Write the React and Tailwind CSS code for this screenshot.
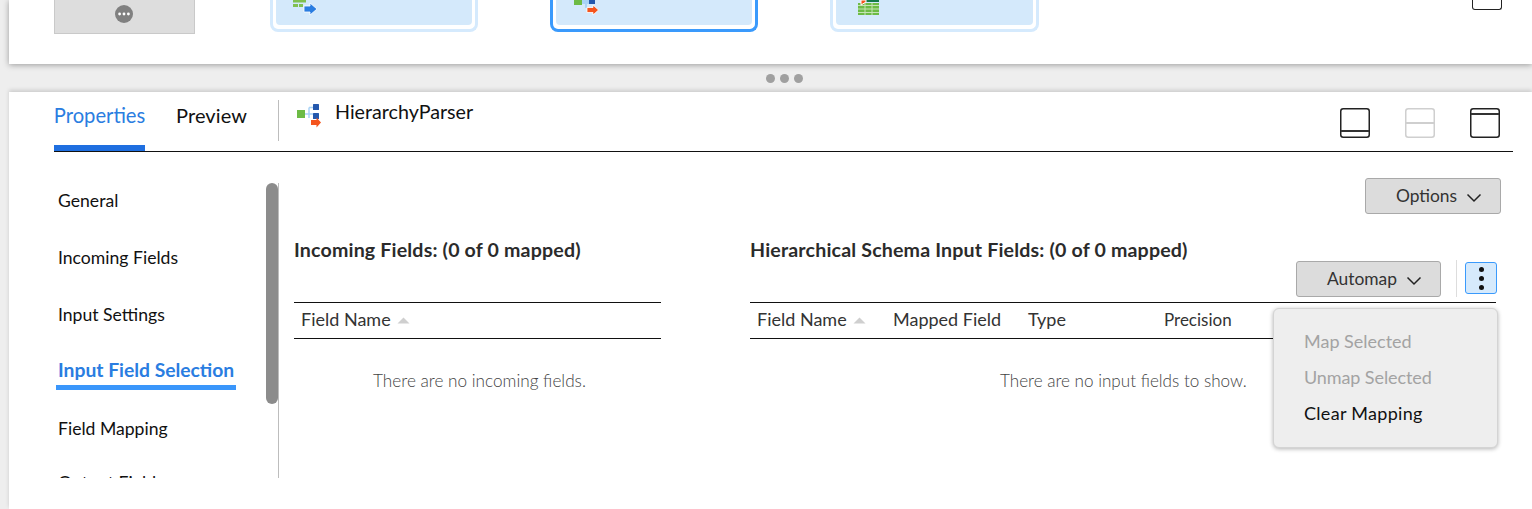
function Chevron({ className = "" }) {
  return (
    <svg width="16" height="10" viewBox="0 0 16 10" className={className} fill="none">
      <path d="M1.5 1.5 L8 8 L14.5 1.5" stroke="#222" strokeWidth="1.5" />
    </svg>
  );
}

function SortUp() {
  return (
    <svg width="13" height="7" viewBox="0 0 13 7" className="ml-[6px] mt-[1px]">
      <path d="M0.5 6.5 L6.5 0.5 L12.5 6.5 Z" fill="#cfcfcf" />
    </svg>
  );
}

function NodeCard({ selected, w = "w-[208px]", children }) {
  return (
    <div
      className={
        "h-[40px] shrink-0 rounded-b-[8px] border-[3px] border-t-0 bg-white px-[3px] pb-[4px] " +
        w +
        " " +
        (selected ? "border-[#3a9afc]" : "border-[#d5eafd]")
      }
    >
      <div className="h-full w-full overflow-hidden rounded-b-[4px] bg-[#d4e9fb] pt-[8px]">{children}</div>
    </div>
  );
}

function PanelIcon({ kind }) {
  const c = kind === "mid" ? "#cfcfcf" : "#222";
  return (
    <svg width="30" height="30" viewBox="0 0 30 30" fill="none">
      <rect x="0.75" y="0.75" width="28.5" height="28.5" rx="2.5" stroke={c} strokeWidth="1.5" />
      {kind === "bottom" && <rect x="1" y="22" width="28" height="2" fill="#333" />}
      {kind === "mid" && <rect x="1" y="14" width="28" height="2" fill={c} />}
      {kind === "top" && <rect x="1" y="5" width="28" height="2" fill="#333" />}
    </svg>
  );
}

function HierarchyIcon() {
  return (
    <svg width="24" height="24" viewBox="0 0 24 24">
      <path d="M8 10 H16 M12 3.5 V14 M12 3.5 H16" stroke="#a9d3f7" strokeWidth="1.5" fill="none" />
      <rect x="0" y="6" width="8" height="8" fill="#6dbb45" />
      <rect x="16" y="0" width="6" height="6" rx="0.5" fill="#2458ad" />
      <rect x="16" y="9" width="6" height="6" rx="0.5" fill="#2458ad" />
      <path d="M14 16 H19.5 V13.5 L24 18.5 L19.5 23.5 V21 H14 Z" fill="#f4541d" />
    </svg>
  );
}

function Nav({ children, active, className = "" }) {
  return (
    <div className={"flex h-[57px] shrink-0 items-center " + (active ? "pb-[2px] " : "pt-[2px] ") + className}>
      <span
        className={
          active
            ? "relative px-[2px] text-[19.3px] font-bold text-[#2a7de1] after:absolute after:-bottom-[5px] after:left-0 after:h-[5px] after:w-full after:bg-[#3a96fb] after:content-['']"
            : "pl-[2px] text-[17.6px] text-[#111]"
        }
      >
        {children}
      </span>
    </div>
  );
}

function GrayButton({ label, w }) {
  return (
    <button className={"flex h-[36px] items-center justify-center gap-[9px] rounded-[3px] border border-[#a9a9a9] bg-[#dcdcdc] pl-[12px] text-[17.4px] text-[#333] " + w}>
      <span>{label}</span>
      <Chevron className="mt-[3px]" />
    </button>
  );
}

export default function App() {
  return (
    <div
      className="relative h-[509px] w-[1532px] overflow-hidden bg-[#eeeeee] pl-[9px]"
      style={{ fontFamily: "Lato, 'Open Sans', sans-serif" }}
    >
      {/* top canvas */}
      <div className="relative z-10 flex h-[64px] items-start bg-white pl-[45px] shadow-[0_1px_6px_rgba(0,0,0,0.35)]">
        <div className="flex h-[34px] w-[141px] shrink-0 items-end justify-center border border-t-0 border-[#c9c9c9] bg-[#dddddd] pb-[10px] pr-[1px]">
          <svg width="18" height="18" viewBox="0 0 18 18">
            <circle cx="9" cy="9" r="9" fill="#808080" />
            <circle cx="4.6" cy="9" r="1.4" fill="#fff" />
            <circle cx="9" cy="9" r="1.4" fill="#fff" />
            <circle cx="13.4" cy="9" r="1.4" fill="#fff" />
          </svg>
        </div>
        <div className="ml-[75px] mt-[-8px]">
          <NodeCard>
            <svg width="26" height="17" viewBox="0 0 26 17" className="ml-[17px]">
              <path d="M0 0 H13 V2.5 H0 Z M0 4 H5 V7 H0 Z M6 4 H10 V7 H6 Z" fill="#80c050" />
              <path d="M11 6 H17 V3 L24 9 L17 15 V12 H11 Z" fill="#2a7de1" stroke="#fff" strokeWidth="0.8" />
            </svg>
          </NodeCard>
        </div>
        <div className="ml-[72px] mt-[-8px]">
          <NodeCard selected>
            <svg width="26" height="17" viewBox="0 0 26 17" className="ml-[18px]">
              <rect x="7" y="0" width="8" height="4" fill="#a9d3f7" />
              <rect x="11" y="0" width="2" height="8" fill="#a9d3f7" />
              <rect x="0" y="0" width="8" height="5" fill="#6dbb45" />
              <rect x="15" y="0" width="6" height="4" fill="#2458ad" />
              <path d="M13 7.5 H19 V5 L24.5 10 L19 15 V12.5 H13 Z" fill="#f4541d" stroke="#fff" strokeWidth="0.8" />
            </svg>
          </NodeCard>
        </div>
        <div className="ml-[72px] mt-[-8px]">
          <NodeCard w="w-[209px]">
            <svg width="26" height="17" viewBox="0 0 26 17" className="ml-[22px]">
              <rect x="8" y="0" width="13" height="2" fill="#137a4a" />
              <path d="M0 3 H21 V15 H0 Z" fill="#6dbb45" />
              <path d="M7 3 V15 M14 3 V15 M0 5.5 H21 M0 9 H21 M0 12.5 H21" stroke="#c5e3b5" strokeWidth="1" />
              <path d="M3 5 L3 0 L8 0 L8 2 Z" fill="#f4541d" stroke="#fff" strokeWidth="1" />
            </svg>
          </NodeCard>
        </div>
        <div className="ml-auto mr-[30px] h-[10px] w-[30px] rounded-b-[3px] border-[1.5px] border-t-0 border-[#222]" />
      </div>

      {/* splitter */}
      <div className="flex h-[28px] items-center justify-center gap-[5px] pl-[27px]">
        <span className="h-[9px] w-[9px] rounded-full bg-[#a0a0a0]" />
        <span className="h-[9px] w-[9px] rounded-full bg-[#a0a0a0]" />
        <span className="h-[9px] w-[9px] rounded-full bg-[#a0a0a0]" />
      </div>

      {/* bottom panel */}
      <div className="relative h-[417px] bg-white pl-[45px] pr-[19px] shadow-[0_-2px_4px_rgba(0,0,0,0.14)]">
        {/* tab strip */}
        <div className="flex h-[60px] items-start border-b border-[#111]">
          <div className="relative flex h-[59px] w-[91px] justify-center pt-[8px] text-[20.2px] text-[#2a7de1]">
            Properties
            <div className="absolute bottom-0 left-0 h-[6px] w-full bg-[#1f6fe0]" />
          </div>
          <div className="ml-[31px] w-[71px] pt-[8px] text-[20px] tracking-[0.1px] text-[#111]">Preview</div>
          <div className="ml-[31px] mt-[8px] h-[41px] w-px shrink-0 bg-[#bdbdbd]" />
          <div className="ml-[18px] mt-[12px]"><HierarchyIcon /></div>
          <div className="ml-[14px] pt-[5px] text-[19.7px] text-[#111]">HierarchyParser</div>
          <div className="ml-auto mr-[13px] mt-[16px] flex gap-[35px]">
            <PanelIcon kind="bottom" />
            <PanelIcon kind="mid" />
            <PanelIcon kind="top" />
          </div>
        </div>

        {/* body */}
        <div className="mt-[31px] flex h-[295px] items-start">
          <div className="relative flex h-full w-[225px] shrink-0 overflow-hidden border-r border-[#bdbdbd]">
            <div className="mt-[-11px] flex w-[212px] flex-col pl-[2px]">
              <Nav>General</Nav>
              <Nav>Incoming Fields</Nav>
              <Nav>Input Settings</Nav>
              <Nav active>Input Field Selection</Nav>
              <Nav>Field Mapping</Nav>
              <Nav className="mt-[-3px]">Output Fields</Nav>
            </div>
            <div className="h-[221px] w-[12px] rounded-[6px] bg-[#8c8c8c]" />
          </div>

          <div className="relative flex-1 pl-[15px]">
            <div className="absolute right-[12px] top-[-5px]">
              <GrayButton label="Options" w="w-[136px]" />
            </div>
            <div className="flex pr-[17px]">
              <div className="w-[367px] shrink-0">
                <div className="mt-[55px] text-[19.6px] font-bold leading-[24px] tracking-[0.17px] text-[#2b2b2b]">Incoming Fields: (0 of 0 mapped)</div>
                <div className="mt-[40px] flex h-[37px] items-center border-y border-[#111] pb-[2px] pl-[7px] text-[18px] text-[#333]">
                  Field Name<SortUp />
                </div>
                <div className="mt-[30px] pl-[4px] text-center text-[17.2px] font-light leading-[24px] text-[#444]">There are no incoming fields.</div>
              </div>
              <div className="relative ml-[89px] flex-1">
                <div className="mt-[55px] text-[19.6px] font-bold leading-[24px] tracking-[0.17px] text-[#2b2b2b]">Hierarchical Schema Input Fields: (0 of 0 mapped)</div>
                <div className="absolute right-[-1px] top-[77px] flex items-start">
                  <div className="mt-[1px]">
                    <GrayButton label="Automap" w="w-[145px]" />
                  </div>
                  <div className="ml-[15px] h-[37px] w-px bg-[#dddddd]" />
                  <button className="ml-[8px] mt-[2px] flex h-[32px] w-[32px] flex-col items-center justify-center gap-[4px] rounded-[3px] border border-[#3a9afc] bg-[#d6eafc]">
                    <span className="h-[5px] w-[5px] rounded-full bg-[#111]" />
                    <span className="h-[5px] w-[5px] rounded-full bg-[#111]" />
                    <span className="h-[5px] w-[5px] rounded-full bg-[#111]" />
                  </button>
                </div>
                <div className="mt-[40px] flex h-[37px] items-center border-y border-[#111] pb-[2px] pl-[7px] text-[18px] text-[#333]">
                  <span className="flex w-[136px] items-center">Field Name<SortUp /></span>
                  <span className="w-[135px]">Mapped Field</span>
                  <span className="w-[136px]">Type</span>
                  <span className="text-[17px]">Precision</span>
                </div>
                <div className="mt-[30px] pl-[250px] text-[17.1px] font-light leading-[24px] text-[#444]">There are no input fields to show.</div>
              </div>
            </div>
          </div>
        </div>

        {/* overflow menu */}
        <div className="absolute left-[1264px] top-[216px] flex h-[140px] w-[225px] flex-col rounded-[6px] border border-[#d4d4d4] bg-[#eeeeee] pl-[30px] pt-[14px] text-[18px] leading-[36px] shadow-[0_1px_4px_rgba(0,0,0,0.3)]">
          <div className="text-[#a3a3a3]">Map Selected</div>
          <div className="tracking-[-0.1px] text-[#a3a3a3]">Unmap Selected</div>
          <div className="tracking-[0.3px] text-[#111]">Clear Mapping</div>
        </div>
      </div>
    </div>
  );
}
